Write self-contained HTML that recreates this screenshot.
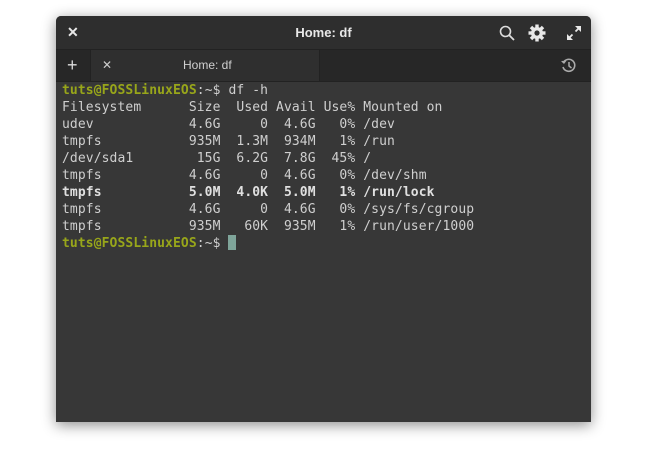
<!DOCTYPE html>
<html><head><style>
body{margin:0;width:650px;height:464px;background:#fff;position:relative;overflow:hidden;font-family:"Liberation Sans",sans-serif}
.win{position:absolute;left:56px;top:16px;width:535px;height:406px;background:#373737;border-radius:5px 5px 0 0;box-shadow:0 3px 14px rgba(0,0,0,.45);overflow:hidden}
.title{position:absolute;left:0;top:0;width:100%;height:33px;background:#2e2e2e;color:#e8e8e8;font-weight:bold;font-size:13px;text-align:center;line-height:33px}
.tabs{position:absolute;left:0;top:33px;width:100%;height:31px;background:#272727;border-top:1px solid #222;border-bottom:1px solid #222}
.tab{position:absolute;left:34px;top:0;width:228px;height:31px;background:#2f2f2f;border-left:1px solid #222;border-right:1px solid #222;color:#d0d0d0;font-size:12px;line-height:31px}
pre{position:absolute;left:6px;top:66px;margin:0;font-family:"DejaVu Sans Mono",monospace;font-size:13px;letter-spacing:0.1px;line-height:17px;color:#cfcfcf}
.g{color:#98a61a;font-weight:bold}.b{font-weight:bold;color:#e0e0e0}
.cur{display:inline-block;width:8px;height:15px;background:#7fa59a;vertical-align:-3px}
</style></head><body>
<div class="win">
 <div class="title">Home: df
  <span style="position:absolute;left:11px;top:0;font-size:14px">✕</span>
  <svg style="position:absolute;left:443px;top:9px" width="16" height="16" viewBox="0 0 16 16"><circle cx="6.5" cy="6.5" r="5" fill="none" stroke="#ddd" stroke-width="1.6"/><path d="M10 10l5 5" stroke="#ddd" stroke-width="1.8"/></svg>
  <svg style="position:absolute;left:472px;top:8px" width="18" height="18" viewBox="0 0 18 18"><g fill="#e8e8e8"><circle cx="9" cy="9" r="6"/><rect x="7.3" y="0.5" width="3.4" height="17"/><rect x="0.5" y="7.3" width="17" height="3.4"/><rect x="7.3" y="0.5" width="3.4" height="17" transform="rotate(45 9 9)"/><rect x="7.3" y="0.5" width="3.4" height="17" transform="rotate(-45 9 9)"/></g><circle cx="9" cy="9" r="2.6" fill="#2e2e2e"/></svg>
  <svg style="position:absolute;left:511px;top:10px" width="14" height="14" viewBox="0 0 14 14"><g fill="#e8e8e8"><path d="M8 0h6v6z"/><path d="M0 8v6h6z"/></g><path d="M12 2L8.5 5.5M2 12l3.5-3.5" stroke="#e8e8e8" stroke-width="1.8"/></svg>
 </div>
 <div class="tabs">
  <span style="position:absolute;left:11px;top:5px;color:#ddd;font-size:18px;line-height:20px">+</span>
  <div class="tab"><span style="position:absolute;left:11px;color:#ccc;font-size:12px">✕</span><span style="position:absolute;left:92px">Home: df</span></div>
  <svg style="position:absolute;left:504px;top:7px" width="17" height="17" viewBox="0 0 17 17"><path d="M3.2 6A6 6 0 1 1 3 10" fill="none" stroke="#aaa" stroke-width="1.6"/><path d="M1 4l3 3 2.5-3.2z" fill="#aaa"/><path d="M9 5v4l2.5 2" fill="none" stroke="#aaa" stroke-width="1.5"/></svg>
 </div>
<pre><span class="g">tuts@FOSSLinuxEOS</span>:~$ df -h
Filesystem      Size  Used Avail Use% Mounted on
udev            4.6G     0  4.6G   0% /dev
tmpfs           935M  1.3M  934M   1% /run
/dev/sda1        15G  6.2G  7.8G  45% /
tmpfs           4.6G     0  4.6G   0% /dev/shm
<span class="b">tmpfs           5.0M  4.0K  5.0M   1% /run/lock</span>
tmpfs           4.6G     0  4.6G   0% /sys/fs/cgroup
tmpfs           935M   60K  935M   1% /run/user/1000
<span class="g">tuts@FOSSLinuxEOS</span>:~$ <span class="cur"></span></pre>
</div>
</body></html>
